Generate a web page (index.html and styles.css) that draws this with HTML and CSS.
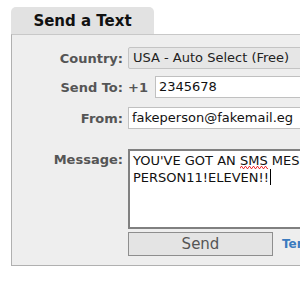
FILE: index.html
```html
<!DOCTYPE html>
<html>
<head>
  <meta charset="utf-8" />
  <title>Send a Text</title>
  <link rel="stylesheet" href="styles.css">
</head>
<body>
  <div class="tab">Send a Text</div>
  <div class="panel">
    <div class="row row-country">
      <label class="lbl">Country:</label>
      <div class="field">
        <div class="select">USA - Auto Select (Free)</div>
      </div>
    </div>
    <div class="row row-phone">
      <label class="lbl">Send To:</label>
      <div class="field">
        <span class="prefix">+1</span>
        <div class="input phone">2345678</div>
      </div>
    </div>
    <div class="row row-from">
      <label class="lbl">From:</label>
      <div class="field">
        <div class="input from">fakeperson@fakemail.eg</div>
      </div>
    </div>
    <div class="row row-message">
      <label class="lbl">Message:</label>
      <div class="field">
        <div class="message">YOU'VE GOT AN <span class="typo">SMS</span> MESSAGE FROM FAKE PERSON11!ELEVEN!!<span class="caret"></span></div>
      </div>
    </div>
    <div class="row row-send">
      <span></span>
      <div class="field">
        <button class="send">Send</button>
        <a class="terms" href="#">Terms</a>
      </div>
    </div>
  </div>
</body>
</html>
```

FILE: styles.css
```css
html, body {
  margin: 0;
  background: #fff;
  overflow: hidden;
}
body {
  padding: 7px 0 0 11px;
  font-family: "DejaVu Sans", Verdana, sans-serif;
  width: 300px;
  height: 300px;
  box-sizing: border-box;
}
.tab {
  width: 143px;
  height: 27px;
  line-height: 29px;
  background: #e2e2e2;
  border-radius: 5px 5px 0 0;
  text-align: center;
  font-weight: bold;
  font-size: 15px;
  color: #111;
}
.panel {
  width: 460px;
  background: #eeeeee;
  border: 1px solid #b0b0b0;
  border-right: none;
  border-top-color: #c8c8c8;
  padding: 11px 0 9px 0;
}
.row {
  display: grid;
  grid-template-columns: 111px 1fr;
  column-gap: 5px;
  align-items: center;
}
.lbl {
  text-align: right;
  font-weight: bold;
  font-size: 13px;
  color: #555;
}
.field {
  display: flex;
  align-items: center;
}
.select {
  width: 260px;
  height: 20px;
  line-height: 20px;
  background: #e6e6e6;
  border: 1px solid #c4c4c4;
  border-radius: 2px;
  padding-left: 4px;
  font-size: 13px;
  color: #222;
}
.row-country {
  margin-top: 1px;
}
.row-phone {
  margin-top: 7px;
}
.prefix {
  font-weight: bold;
  font-size: 13px;
  color: #555;
  margin-right: 7px;
}
.input {
  height: 20px;
  line-height: 20px;
  background: #fff;
  border: 1px solid #c0c0c0;
  padding-left: 3px;
  font-size: 13px;
  color: #111;
}
.phone {
  width: 200px;
}
.from {
  width: 260px;
}
.row-from {
  margin-top: 9px;
}
.row-message {
  margin-top: 20px;
  align-items: start;
}
.row-message .lbl {
  padding-top: 3px;
}
.message {
  width: 318px;
  height: 72px;
  background: #fff;
  border: 2px solid #808080;
  border-right-color: #c8c8c8;
  padding: 1px 3px 3px;
  font-size: 13px;
  line-height: 17px;
  color: #111;
  overflow: hidden;
}
/* spellcheck squiggle */
.typo {
  position: relative;
}
.typo::after {
  content: "";
  position: absolute;
  left: 0;
  right: 0;
  bottom: -1px;
  height: 3px;
  background: url("data:image/svg+xml,%3Csvg xmlns='http://www.w3.org/2000/svg' width='4' height='3'%3E%3Cpath d='M0 2.5 L1 0.5 L2 0.5 L3 2.5 L4 2.5' fill='none' stroke='%23e33' stroke-width='1'/%3E%3C/svg%3E") repeat-x;
}
.caret {
  display: inline-block;
  width: 1px;
  height: 16px;
  background: #000;
  vertical-align: -3px;
  margin-left: 1px;
}
.row-send {
  margin-top: 3px;
}
.send {
  width: 145px;
  height: 24px;
  background: #e4e4e4;
  border: 1px solid #8e8e8e;
  font-family: "DejaVu Sans", Verdana, sans-serif;
  font-size: 15px;
  color: #555;
  padding: 0;
}
.terms {
  margin-left: 9px;
  font-size: 12px;
  font-weight: bold;
  color: #3b7bbf;
  text-decoration: none;
}
```
